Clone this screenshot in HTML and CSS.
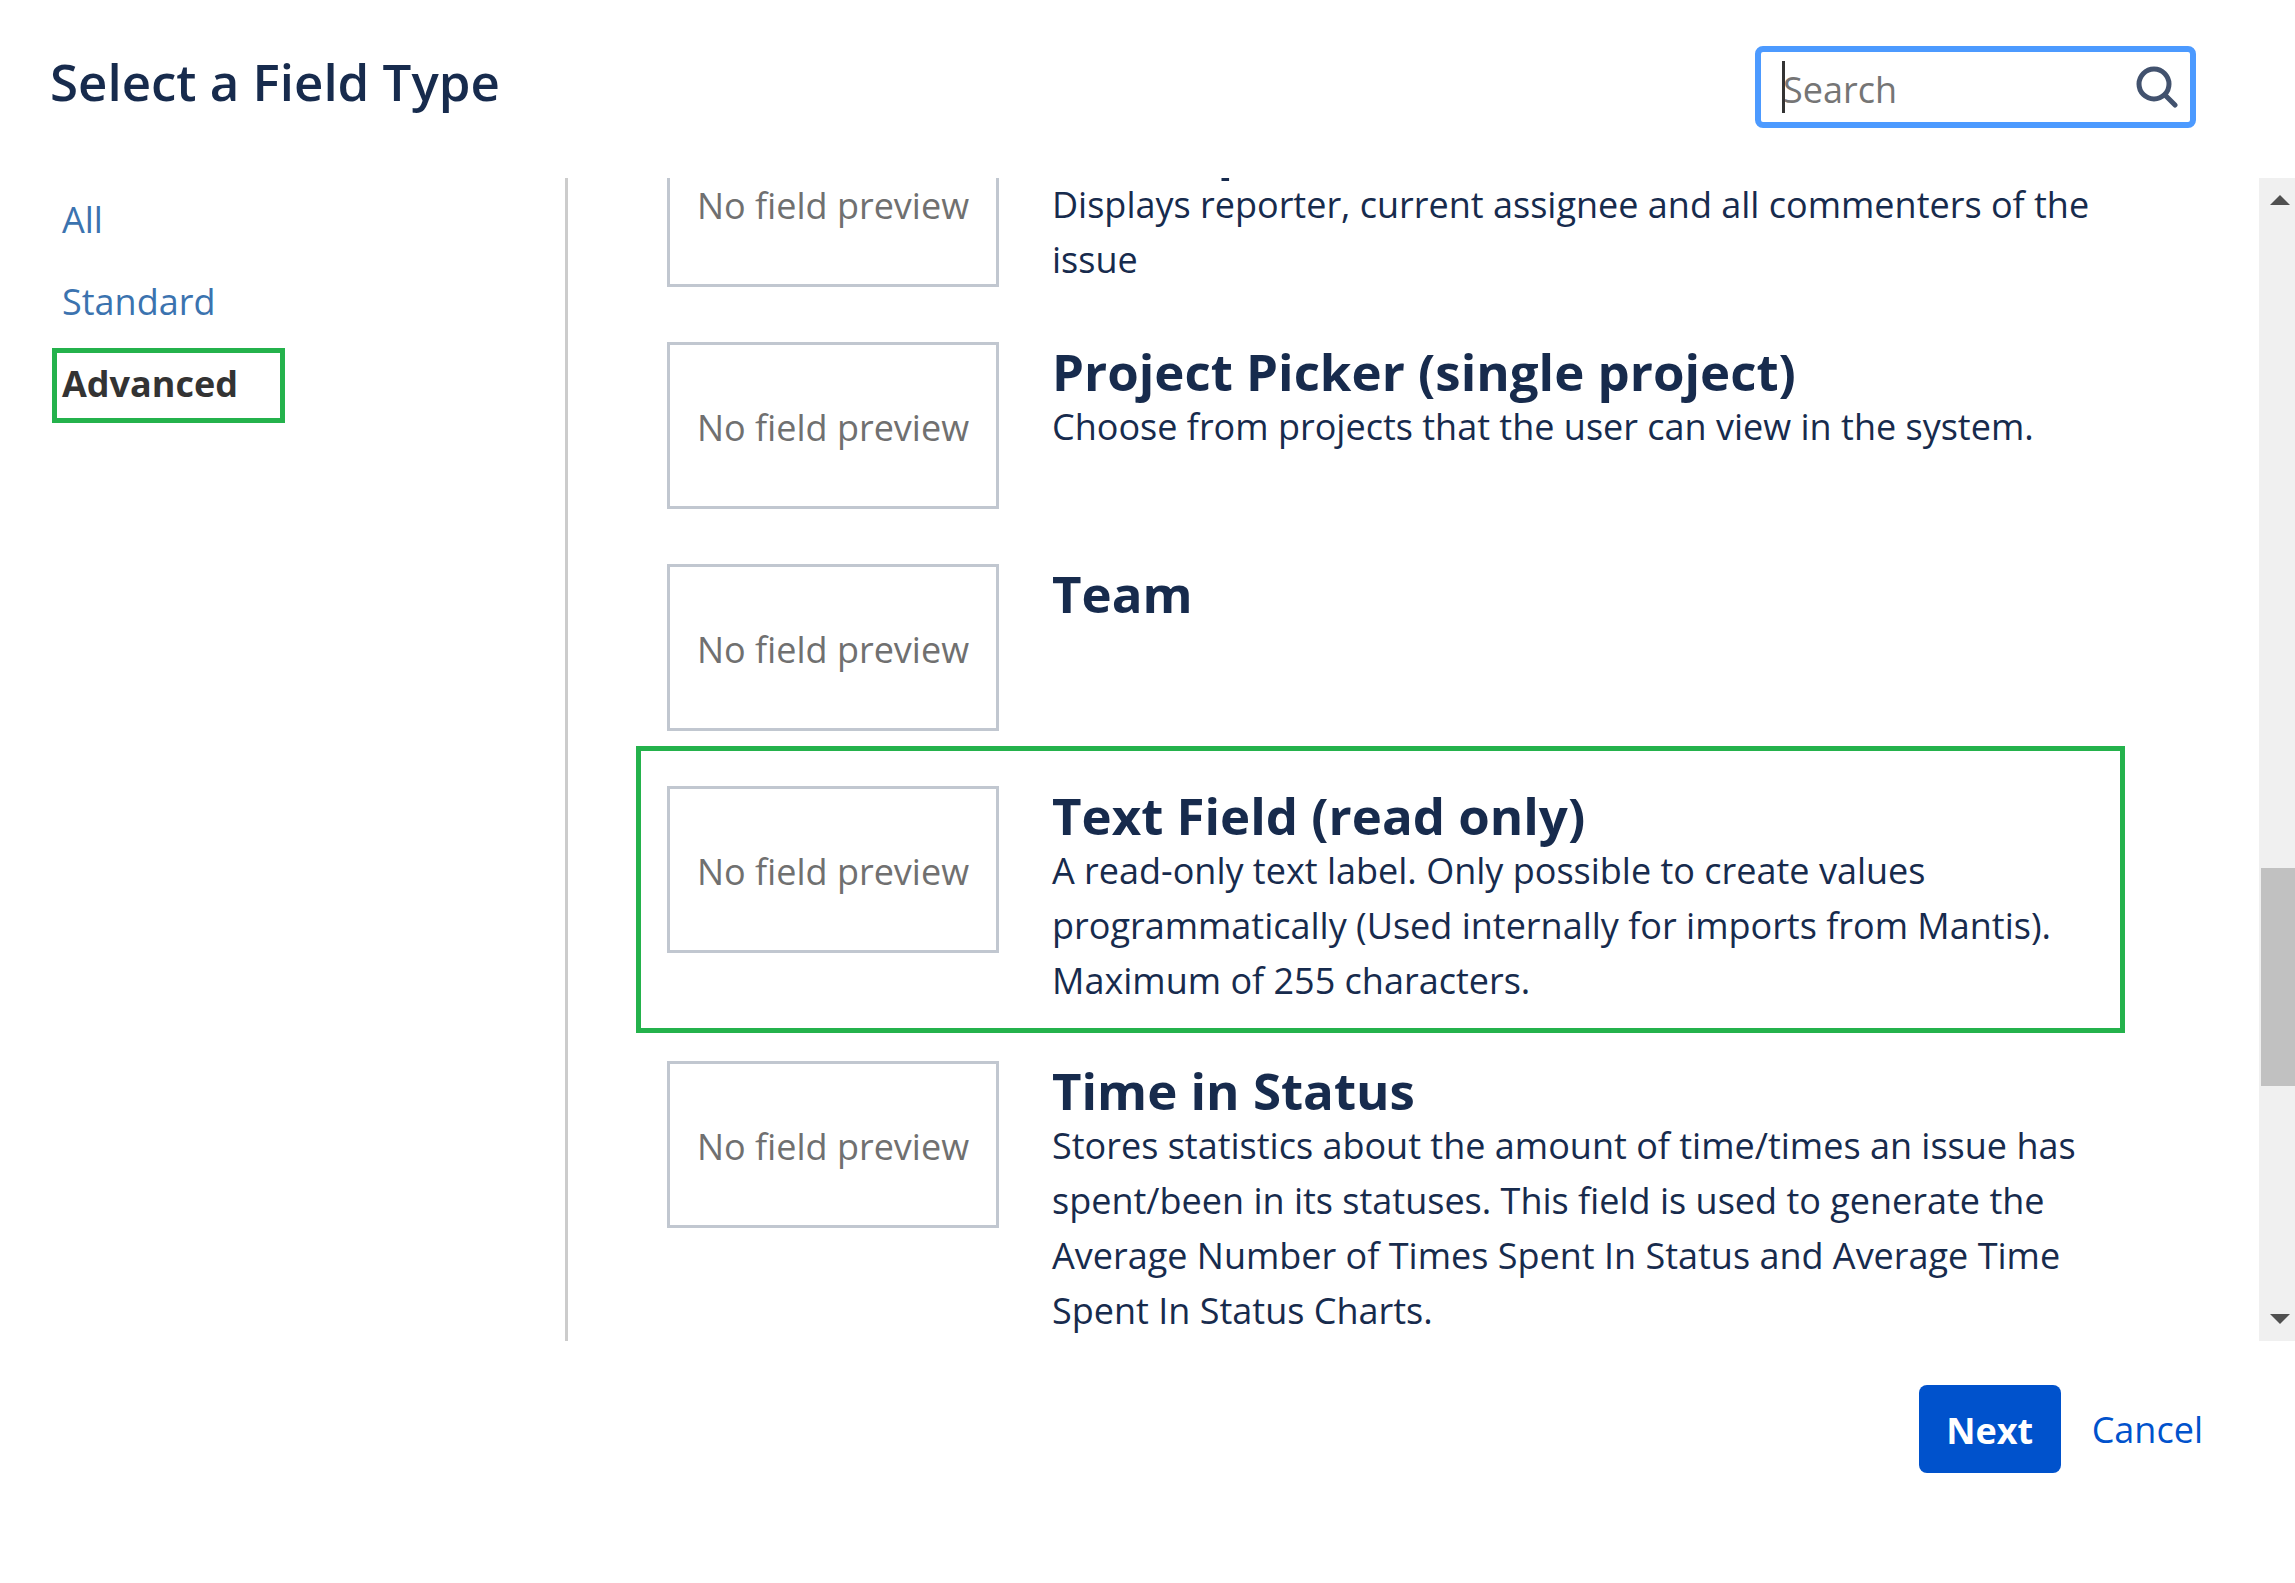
FILE: index.html
```html
<!DOCTYPE html>
<html lang="en">
<head>
<meta charset="UTF-8">
<meta name="viewport" content="width=device-width, initial-scale=1.0">
<title>Select a Field Type</title>
<link rel="stylesheet" href="styles.css">
</head>
<body>

<!-- Header -->
<header class="dialog-header">
    <h1>Select a Field Type</h1>
    <form class="search">
        <input type="text" id="search" placeholder="Search" aria-label="Search">
        <span class="caret"></span>
        <svg class="search-icon" viewBox="0 0 42 42" aria-hidden="true">
            <circle cx="18" cy="18" r="15"/>
            <path d="M29 29L39 39"/>
        </svg>
    </form>
</header>

<!-- Main Content -->
<main class="dialog-body">
    <nav class="categories">
        <a href="#all">All</a>
        <a href="#standard">Standard</a>
        <a href="#advanced" class="active">Advanced</a>
    </nav>

    <section class="fields">
        <ul class="field-list">
            <li class="field">
                <div class="preview">No field preview</div>
                <div class="details">
                    <h2>Participants of an issue</h2>
                    <p>Displays reporter, current assignee and all commenters of the issue</p>
                </div>
            </li>
            <li class="field">
                <div class="preview">No field preview</div>
                <div class="details">
                    <h2>Project Picker (single project)</h2>
                    <p>Choose from projects that the user can view in the system.</p>
                </div>
            </li>
            <li class="field">
                <div class="preview">No field preview</div>
                <div class="details">
                    <h2>Team</h2>
                </div>
            </li>
            <li class="field marked">
                <div class="preview">No field preview</div>
                <div class="details">
                    <h2>Text Field (read only)</h2>
                    <p>A read-only text label. Only possible to create values programmatically (Used internally for imports from Mantis). Maximum of 255 characters.</p>
                </div>
            </li>
            <li class="field">
                <div class="preview">No field preview</div>
                <div class="details">
                    <h2>Time in Status</h2>
                    <p>Stores statistics about the amount of time/times an issue has spent/been in its statuses. This field is used to generate the Average Number of Times Spent In Status and Average Time Spent In Status Charts.</p>
                </div>
            </li>
        </ul>
    </section>

    <div class="scrollbar" aria-hidden="true">
        <svg viewBox="0 0 20 10"><path d="M0 10L10 0L20 10Z"/></svg>
        <div class="track"><div class="thumb"></div></div>
        <svg viewBox="0 0 20 10"><path d="M0 0L10 10L20 0Z"/></svg>
    </div>
</main>

<!-- Footer -->
<footer class="dialog-footer">
    <button type="button" class="next">Next</button>
    <a href="#cancel" class="cancel">Cancel</a>
</footer>

</body>
</html>
```
FILE: styles.css
```css
* {
    box-sizing: border-box;
}

body {
    display: flex;
    flex-direction: column;
    height: 100vh;
    margin: 0;
    background: #fff;
    color: #172b4d;
    font-family: 'Open Sans', 'Noto Sans', sans-serif;
    font-size: 36px;
    line-height: 55px;
}

h1, h2, p, ul {
    margin: 0;
    padding: 0;
}

/* Header */
.dialog-header {
    display: flex;
    justify-content: space-between;
    align-items: flex-start;
    height: 178px;
    padding: 46px 99px 0 50px;
}

h1 {
    font-size: 51px;
    font-weight: 600;
    line-height: 70px;
}

.search {
    position: relative;
    width: 441px;
}

.search input {
    display: block;
    width: 100%;
    height: 82px;
    padding: 4px 80px 0 22px;
    border: 6px solid #4c9aff;
    border-radius: 8px;
    outline: none;
    background: #fff;
    color: #172b4d;
    font: inherit;
}

.search input::placeholder {
    color: #757575;
    opacity: 1;
}

.caret {
    position: absolute;
    top: 15px;
    left: 27px;
    width: 3px;
    height: 52px;
    background: #333;
}

.search-icon {
    position: absolute;
    top: 20px;
    right: 18px;
    width: 42px;
    height: 42px;
    fill: none;
    stroke: #42526e;
    stroke-width: 5;
    stroke-linecap: round;
}

/* Body */
.dialog-body {
    display: flex;
    flex: 1;
    min-height: 0;
}

.categories {
    display: flex;
    flex-direction: column;
    align-items: flex-start;
    gap: 7px;
    width: 568px;
    padding: 6px 0 0 52px;
    border-right: 3px solid #ccc;
}

.categories a {
    width: 233px;
    height: 75px;
    padding: 3px 5px;
    border: 5px solid transparent;
    color: #3b73af;
    text-decoration: none;
}

.categories .active {
    border-color: #24b24c;
    color: #333;
    font-weight: 700;
}

.fields {
    flex: 1;
    overflow: hidden;
    padding: 0 134px 0 99px;
}

/* list is scrolled part of the way down */
.field-list {
    display: flex;
    flex-direction: column;
    gap: 53px;
    margin-top: -58px;
    list-style: none;
}

.field {
    position: relative;
    display: flex;
    align-items: flex-start;
    gap: 53px;
    min-height: 169px;
}

.marked::after {
    content: "";
    position: absolute;
    inset: -40px 0 -25px -31px;
    border: 5px solid #24b24c;
}

.preview {
    display: flex;
    flex: none;
    justify-content: center;
    align-items: center;
    width: 332px;
    height: 167px;
    padding-top: 3px;
    border: 3px solid #c1c7d0;
    color: #707070;
    white-space: nowrap;
}

.details {
    flex: 1;
    padding-top: 2px;
}

h2 {
    font-size: 51px;
    font-weight: 700;
    line-height: 55px;
}

/* Scrollbar */
.scrollbar {
    display: flex;
    flex-direction: column;
    align-items: center;
    width: 36px;
    padding: 17px 0;
    background: #f0f0f0;
}

.scrollbar svg {
    flex: none;
    width: 20px;
    height: 10px;
    margin-left: 6px;
    fill: #505050;
}

.track {
    display: flex;
    flex: 1;
    flex-direction: column;
    align-self: stretch;
    padding: 663px 0 0 2px;
}

.thumb {
    height: 218px;
    background: #c1c1c1;
}

/* Footer */
.dialog-footer {
    display: flex;
    justify-content: flex-end;
    align-items: flex-start;
    gap: 31px;
    height: 242px;
    padding: 44px 92px 0 0;
}

.next {
    width: 142px;
    height: 88px;
    padding: 2px 0 0;
    border: 0;
    border-radius: 8px;
    background: #0052cc;
    color: #fff;
    font: inherit;
    font-weight: 700;
}

.cancel {
    color: #0052cc;
    line-height: 90px;
    text-decoration: none;
}
```
